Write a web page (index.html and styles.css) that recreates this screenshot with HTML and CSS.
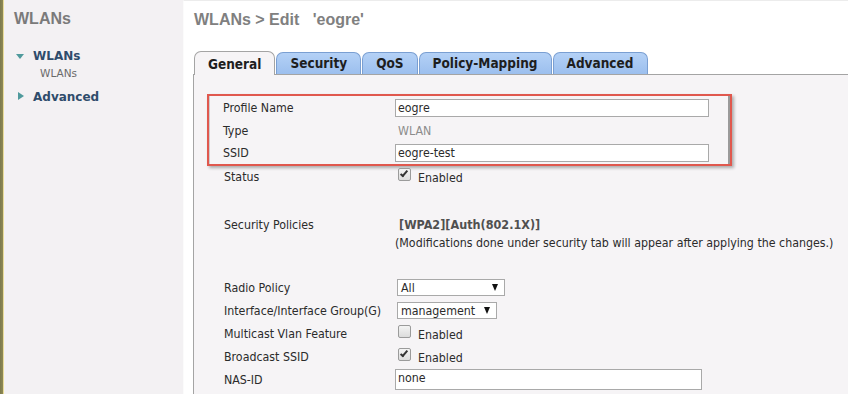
FILE: index.html
```html
<!DOCTYPE html>
<html lang="en">
  <head>
    <meta charset="utf-8">
    <title>WLANs &gt; Edit</title>
    <link rel="stylesheet" href="styles.css">
  </head>
  <body>
    <div class="edge"></div>
    <nav class="sidebar">
      <div class="side-title">WLANs</div>
      <div class="side-item open"><span class="tri tri-down"></span>WLANs</div>
      <div class="side-sub">WLANs</div>
      <div class="side-item"><span class="tri tri-right"></span>Advanced</div>
    </nav>
    <main class="main">
      <h1 class="page-title">WLANs &gt; Edit &nbsp; 'eogre'</h1>
      <div class="tabs">
        <div class="tab active">General</div>
        <div class="tab">Security</div>
        <div class="tab">QoS</div>
        <div class="tab">Policy-Mapping</div>
        <div class="tab">Advanced</div>
      </div>
      <div class="panel">
        <div class="red-box">
          <div class="tbl">
            <div class="row"><span class="lbl">Profile Name</span><div class="field">eogre</div></div>
            <div class="row"><span class="lbl">Type</span><span class="muted">WLAN</span></div>
            <div class="row last"><span class="lbl">SSID</span><div class="field">eogre-test</div></div>
          </div>
        </div>
        <div class="row pad status"><span class="lbl">Status</span><span class="check on"></span><span class="chk-text">Enabled</span></div>

        <div class="policy pad">
          <span class="lbl">Security Policies</span>
          <div class="policy-val">
            <div class="strong">[WPA2][Auth(802.1X)]</div>
            <div class="note">(Modifications done under security tab will appear after applying the changes.)</div>
          </div>
        </div>

        <div class="lower pad">
          <div class="row"><span class="lbl">Radio Policy</span><div class="select w-radio"><span>All</span><span class="arrow"></span></div></div>
          <div class="row"><span class="lbl">Interface/Interface Group(G)</span><div class="select w-iface"><span>management</span><span class="arrow"></span></div></div>
          <div class="row"><span class="lbl">Multicast Vlan Feature</span><span class="check"></span><span class="chk-text">Enabled</span></div>
          <div class="row"><span class="lbl">Broadcast SSID</span><span class="check on"></span><span class="chk-text">Enabled</span></div>
          <div class="row"><span class="lbl">NAS-ID</span><div class="field nas">none</div></div>
        </div>
      </div>
    </main>
  </body>
</html>
```

FILE: styles.css
```css
html { box-sizing : border-box }
*, *:before, *:after { box-sizing : inherit }

:root {
  --c-side : #f3f1f3;
  --c-panel : #f6f4f6;
  --c-title : #808080;
  --c-nav : #2f4c6b;
  --c-teal : #4f9a9c;
  --c-text : #2b2b2b;
  --c-line : #a9a9a9;
  --c-tab-line : #7a9fd2;
  --c-red : #e0584e;

  --f-arial : "Liberation Sans", Arial, sans-serif;
  --f-form : "DejaVu Sans Condensed", "DejaVu Sans", sans-serif;
}

body {
  margin : 0;
  height : 394px;
  overflow : hidden;
  display : flex;
  background : #fff;
}

.edge {
  width : 4px;
  background : linear-gradient(90deg, #7c7a4c 0, #8e8a56 3px, #e9dc9a 3px);
}

/* left menu */
.sidebar {
  width : 179px;
  background : var(--c-side);
  padding : 9px 0 0 10px;
}

.side-title {
  font : bold 16px/20px var(--f-arial);
  color : #7a7a7a;
  margin-bottom : 18px;
}

.side-item {
  position : relative;
  font : bold 12px/18px "DejaVu Sans", sans-serif;
  color : var(--c-nav);
  padding-left : 19px;
}

.side-sub + .side-item { margin-top : 7px }

.side-sub {
  font : 10.5px/16px "DejaVu Sans", sans-serif;
  color : #6a6a6a;
  padding-left : 26px;
}

.tri {
  position : absolute;
  width : 0;
  height : 0;
}

.tri-down {
  left : 2px;
  top : 7px;
  border-left : 4.5px solid transparent;
  border-right : 4.5px solid transparent;
  border-top : 5px solid var(--c-teal);
}

.tri-right {
  left : 4px;
  top : 4px;
  border-top : 4.5px solid transparent;
  border-bottom : 4.5px solid transparent;
  border-left : 6px solid var(--c-teal);
}

/* content */
.main {
  flex : 1;
  display : flex;
  flex-direction : column;
  padding : 0 0 0 9px;
  border-left : 1px solid #fbfbfb;
  border-top : 1px solid #ececec;
}

.page-title {
  margin : 9px 0 0 1px;
  font : bold 16px/20px var(--f-arial);
  color : var(--c-title);
  white-space : pre;
}

.tabs {
  display : flex;
  margin-top : 21px;
  padding-left : 1px;
  align-items : flex-end;
}

.tab {
  height : 22px;
  padding : 0 13px;
  margin-left : 1px;
  font : bold 13.5px/21px var(--f-form);
  font-stretch : condensed;
  color : #1e1e1e;
  background : linear-gradient(#b4d1f6, #9cbfee);
  border : 1px solid var(--c-tab-line);
  border-bottom : none;
  border-radius : 7px 7px 0 0;
}

.tab.active {
  height : 24px;
  margin-left : 0;
  background : var(--c-panel);
  border-color : #a4a4a4;
  margin-bottom : -1px;
  position : relative;
  line-height : 24px;
}

.panel {
  flex : 1;
  background : var(--c-panel);
  border-top : 1px solid #a4a4a4;
  border-left : 1px solid #a4a4a4;
  font : 12.3px var(--f-form);
  font-stretch : condensed;
  color : var(--c-text);
}

.red-box {
  width : 525px;
  margin : 19px 0 0 13px;
  border : 2px solid var(--c-red);
  box-shadow : 2px 2px 3px rgba(0, 0, 0, 0.3);
}

.tbl {
  border-left : 1px solid #cfcdcf;
  border-right : 2px solid #9a9a9a;
  padding-left : 13px;
}

.row {
  display : flex;
  align-items : center;
  height : 23px;
}

.tbl .row.last { height : 22px }

.status { margin-top : -1px }

.pad { padding-left : 30px }

.lbl {
  width : 172px;
  flex : none;
}

.field {
  width : 314px;
  height : 18px;
  background : #fff;
  border : 1px solid var(--c-line);
  padding : 0 2px;
  line-height : 16px;
}

.field.nas {
  width : 307px;
  height : 21px;
  line-height : 17px;
  margin-left : -1px;
}

.muted {
  color : #8c8c8c;
  padding-left : 3px;
}

.check {
  width : 13px;
  height : 13px;
  margin : 0 7px 0 2px;
  border : 1px solid #9b9b9b;
  border-radius : 2px;
  background : linear-gradient(#f4f4f4, #dcdcdc);
  position : relative;
  top : -2px;
}

.check.on:after {
  content : "";
  position : absolute;
  left : 3px;
  top : 0;
  width : 4px;
  height : 8px;
  border : solid #333;
  border-width : 0 2px 2px 0;
  transform : rotate(40deg);
}

.chk-text { padding-top : 3px }

.policy {
  display : flex;
  margin-top : 28px;
  line-height : 18px;
}

.policy-val { margin-left : -1px }

.strong {
  font-weight : bold;
  font-size : 12.5px;
  color : #505050;
  padding-left : 4px;
}

.lower { margin-top : 24px }

.select {
  height : 17px;
  background : #fff;
  border : 1px solid var(--c-line);
  display : flex;
  align-items : center;
  justify-content : space-between;
  padding : 0 6px 0 3px;
  margin-left : 1px;
}

.w-radio { width : 108px }
.w-iface { width : 100px }

.arrow {
  width : 0;
  height : 0;
  border-left : 3.5px solid transparent;
  border-right : 3.5px solid transparent;
  border-top : 7px solid #111;
}
```
